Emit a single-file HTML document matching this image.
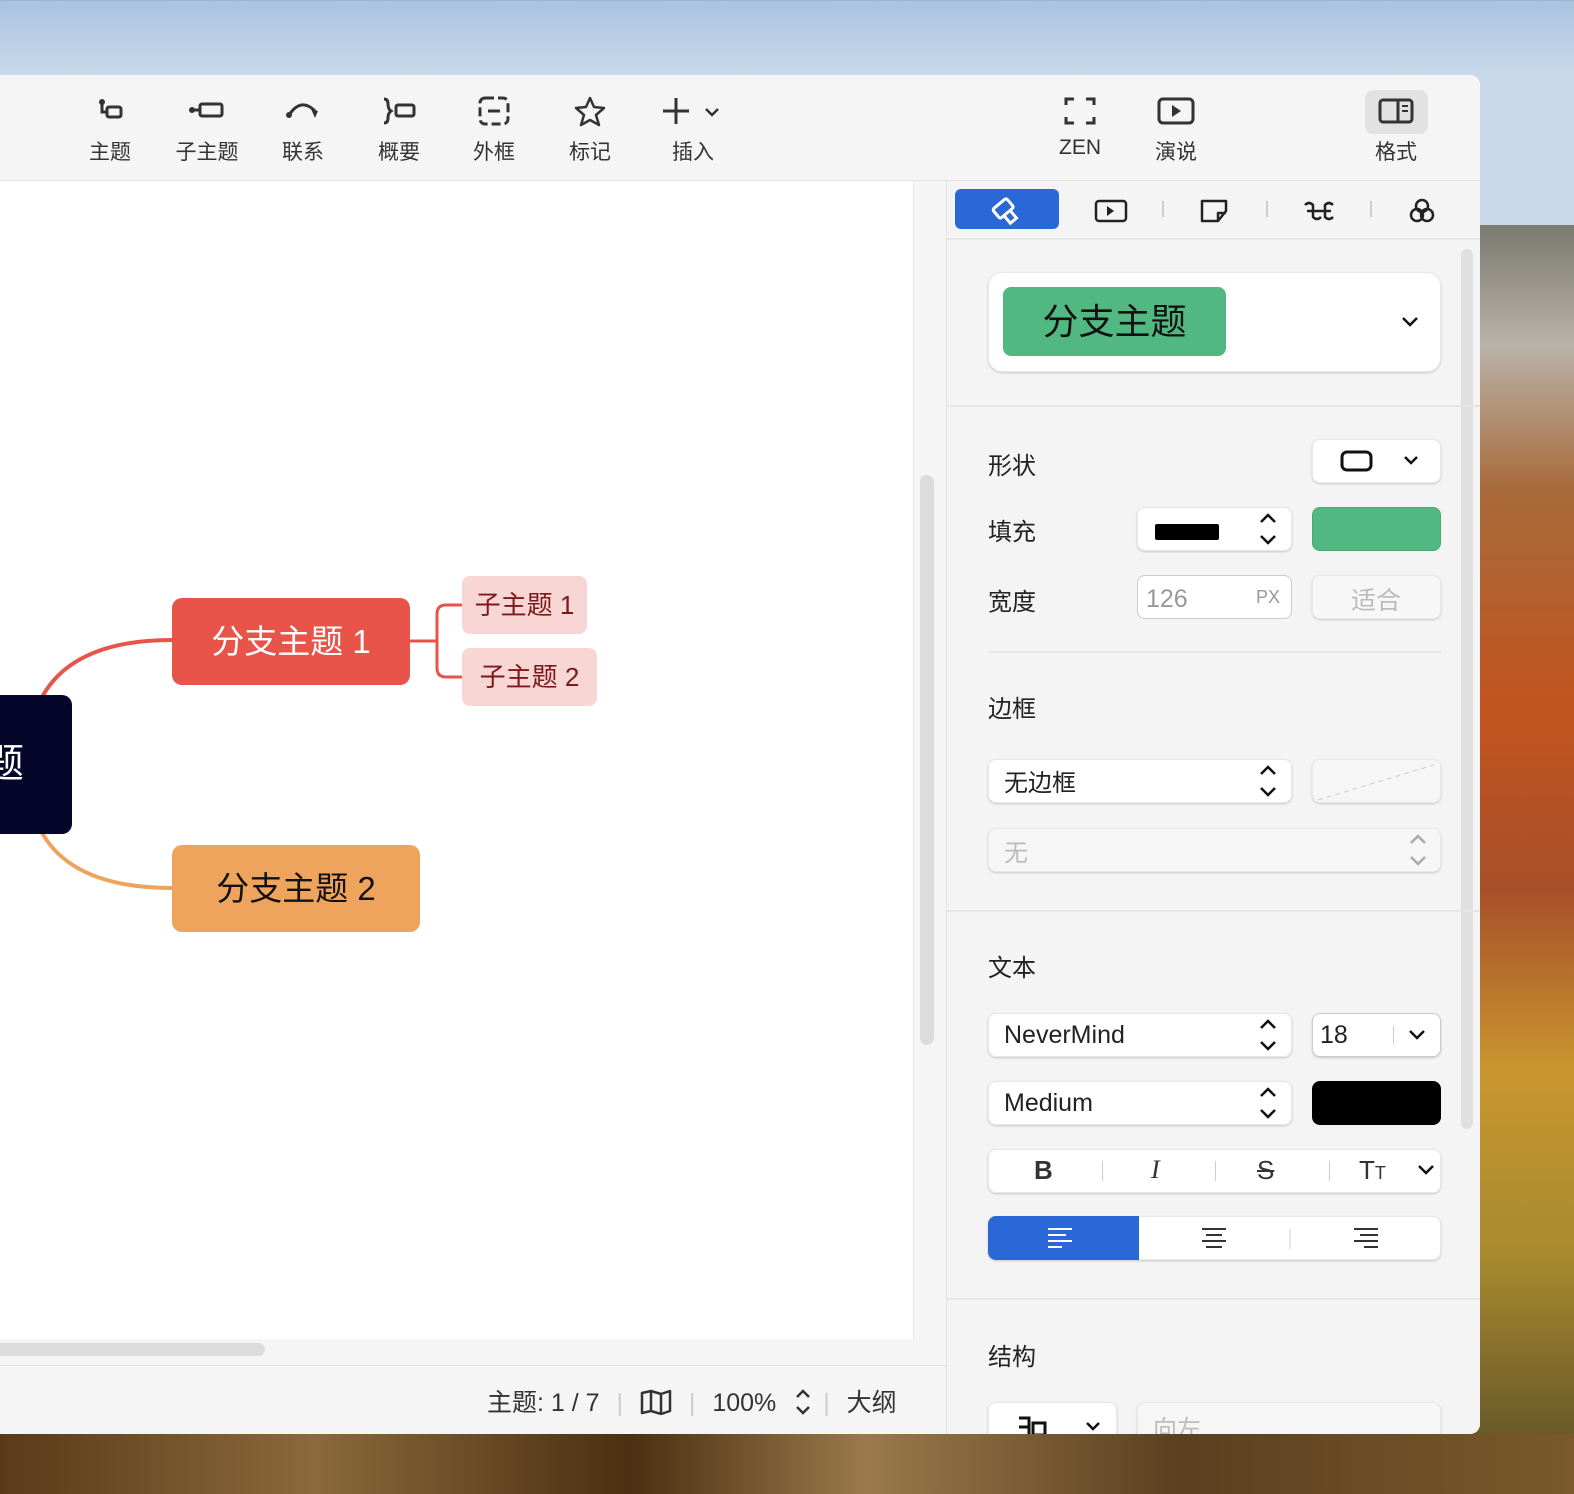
<!DOCTYPE html>
<html><head><meta charset="utf-8"><style>
*{box-sizing:border-box;margin:0;padding:0}
body{width:1574px;height:1490px;overflow:hidden;position:relative;font-family:"Liberation Sans","Noto Sans CJK SC",sans-serif;color:#222;
background:linear-gradient(180deg,#a9c3df 0%,#c9d9ea 5%,#c9d9ea 60%,#7a4a1e 96%,#3a2a12 100%)}
.abs{position:absolute}
.mount{left:1474px;top:225px;width:100px;height:1210px;background:linear-gradient(180deg,#7a7a70 0%,#b9b2a8 10%,#a86a3a 22%,#c2541e 40%,#a8502a 55%,#c9962e 70%,#a88a2e 85%,#6a5a2a 100%)}
.water{left:0;top:1434px;width:1574px;height:60px;background:linear-gradient(90deg,#5a3a18,#8a6a3a 20%,#4a3012 40%,#9a7a4a 55%,#5a4020 75%,#7a5a2a)}
.win{left:-10px;top:75px;width:1490px;height:1359px;background:#f5f5f5;border-radius:0 10px 10px 0;overflow:hidden}
.tb{position:absolute;top:0;left:0;width:1490px;height:106px;background:#f5f5f5;border-bottom:1px solid #e2e2e2}
.tbi{position:absolute;top:20px;width:80px;text-align:center;font-size:21px;color:#333}
.tbi svg{display:block;margin:0 auto 9px;height:32px}
.canvas{position:absolute;left:0;top:106px;width:924px;height:1158px;background:#fff;border-right:1px solid #e6e6e6}
.panel{position:absolute;left:956px;top:106px;width:534px;height:1260px;background:#f4f4f4;border-left:1px solid #e2e2e2}
.lbl{position:absolute;left:41px;font-size:24px;color:#222}
.box{position:absolute;background:#fff;border-radius:8px;box-shadow:0 1px 2px rgba(0,0,0,.18);border:1px solid #e8e8e8}
.txt{position:absolute;font-size:25px}
</style></head><body>
<div class="abs mount"></div>
<div class="abs water"></div>
<div class="abs win">
 <div class="tb">
  <div class="tbi" style="left:80px"><svg width="34" height="32" viewBox="0 0 34 32"><circle cx="9" cy="7" r="3" fill="#333"/><path d="M9 7v10h5" stroke="#333" stroke-width="3" fill="none"/><rect x="14" y="12" width="14" height="10" rx="2" stroke="#333" stroke-width="3" fill="none"/></svg>主题</div>
  <div class="tbi" style="left:177px"><svg width="40" height="32" viewBox="0 0 40 32"><circle cx="5" cy="15" r="3" fill="#333"/><path d="M5 15h8" stroke="#333" stroke-width="3"/><rect x="13" y="9" width="22" height="12" rx="2" stroke="#333" stroke-width="3" fill="none"/></svg>子主题</div>
  <div class="tbi" style="left:273px"><svg width="40" height="32" viewBox="0 0 40 32"><path d="M6 20Q18 2 32 16" stroke="#333" stroke-width="3" fill="none"/><circle cx="6" cy="20" r="3" fill="#333"/><path d="M28 14l7 2-3 7z" fill="#333"/></svg>联系</div>
  <div class="tbi" style="left:369px"><svg width="40" height="32" viewBox="0 0 40 32"><path d="M5 4q4 0 4 5t3 7q-3 2-3 7t-4 5" stroke="#333" stroke-width="3" fill="none"/><rect x="17" y="10" width="18" height="11" rx="2" stroke="#333" stroke-width="3" fill="none"/></svg>概要</div>
  <div class="tbi" style="left:464px"><svg width="36" height="32" viewBox="0 0 36 32"><rect x="4" y="3" width="28" height="26" rx="5" stroke="#333" stroke-width="3" fill="none" stroke-dasharray="9 4"/><path d="M12 16h12" stroke="#333" stroke-width="3"/></svg>外框</div>
  <div class="tbi" style="left:560px"><svg width="36" height="32" viewBox="0 0 36 32"><path d="M18 3l4 9 10 1-8 7 3 10-9-5-9 5 3-10-8-7 10-1z" stroke="#333" stroke-width="2.5" fill="none" stroke-linejoin="round"/></svg>标记</div>
  <div class="tbi" style="left:663px"><svg width="66" height="32" viewBox="0 0 66 32"><path d="M16 3v26M3 16h26" stroke="#333" stroke-width="3"/><path d="M46 14l6 6 6-6" stroke="#333" stroke-width="2.5" fill="none"/></svg>插入</div>
  <div class="tbi" style="left:1050px"><svg width="36" height="32" viewBox="0 0 36 32"><path d="M4 10V4h8M24 4h8v6M32 22v6h-8M12 28H4v-6" stroke="#333" stroke-width="3" fill="none"/></svg>ZEN</div>
  <div class="tbi" style="left:1146px"><svg width="40" height="32" viewBox="0 0 40 32"><rect x="3" y="4" width="34" height="24" rx="4" stroke="#333" stroke-width="3" fill="none"/><path d="M16 10l9 6-9 6z" fill="#333"/></svg>演说</div>
  <div style="position:absolute;left:1375px;top:15px;width:63px;height:44px;background:#e2e2e2;border-radius:8px"></div>
  <div class="tbi" style="left:1366px"><svg width="40" height="32" viewBox="0 0 40 32"><rect x="4" y="5" width="32" height="22" rx="3" stroke="#333" stroke-width="3" fill="none"/><path d="M22 5v22" stroke="#333" stroke-width="3"/><path d="M26 11h6M26 16h6" stroke="#333" stroke-width="2"/></svg>格式</div>
 </div>
 <div class="canvas">
  <svg width="924" height="1158" style="position:absolute;left:0;top:0">
   <path d="M50 520Q80 459 182 459" stroke="#e8534a" stroke-width="4" fill="none"/>
   <path d="M50 648Q80 707 182 707" stroke="#eea45c" stroke-width="4" fill="none"/>
   <path d="M420 460H447M472 424h-16q-9 0-9 9v54q0 9 9 9h16" stroke="#e8534a" stroke-width="3" fill="none"/>
  </svg>
  <div style="position:absolute;left:-20px;top:514px;width:102px;height:139px;background:#06062a;border-radius:10px;color:#fff;font-size:40px;line-height:139px;text-align:right;padding-right:48px;overflow:hidden">题</div>
  <div style="position:absolute;left:182px;top:417px;width:238px;height:87px;background:#e8534a;border-radius:10px;color:#fff;font-size:33px;line-height:87px;text-align:center">分支主题 1</div>
  <div style="position:absolute;left:182px;top:664px;width:248px;height:87px;background:#eea45c;border-radius:10px;color:#111;font-size:33px;line-height:87px;text-align:center">分支主题 2</div>
  <div style="position:absolute;left:472px;top:395px;width:125px;height:58px;background:#f8d6d4;border-radius:8px;color:#7a1a1a;font-size:26px;line-height:58px;text-align:center">子主题 1</div>
  <div style="position:absolute;left:472px;top:467px;width:135px;height:58px;background:#f8d6d4;border-radius:8px;color:#7a1a1a;font-size:26px;line-height:58px;text-align:center">子主题 2</div>
 </div>
 <div style="position:absolute;left:930px;top:400px;width:14px;height:570px;background:#dcdcdc;border-radius:7px"></div>
 <div style="position:absolute;left:0;top:1268px;width:275px;height:13px;background:#dcdcdc;border-radius:7px"></div>
 <div style="position:absolute;left:0;top:1290px;width:956px;height:1px;background:#e2e2e2"></div>
 <div style="position:absolute;left:497px;top:1308px;font-size:25px;color:#333;white-space:nowrap">主题: 1 / 7 <span style="color:#ccc;margin:0 10px">|</span> <svg width="32" height="26" viewBox="0 0 32 26" style="vertical-align:-4px"><path d="M2 4l9-2 10 3 9-3v20l-9 3-10-3-9 2z M11 2v19M21 5v19" stroke="#333" stroke-width="2.5" fill="none" stroke-linejoin="round"/></svg> <span style="color:#ccc;margin:0 10px">|</span> 100% <svg width="20" height="30" viewBox="0 0 20 30" style="vertical-align:-6px;margin-left:10px"><path d="M4 10l6-6 6 6M4 20l6 6 6-6" stroke="#333" stroke-width="2.5" fill="none"/></svg><span style="color:#ccc;margin:0 10px">|</span> 大纲</div>
 <div class="panel">
  <div style="position:absolute;left:8px;top:8px;width:104px;height:40px;background:#2a68d8;border-radius:6px"></div>
  <svg width="534" height="50" style="position:absolute;left:0;top:4px">
   <g transform="translate(60 28) rotate(-40)" stroke="#fff" stroke-width="3" fill="none"><rect x="-9" y="-12" width="18" height="12" rx="2"/><path d="M-4 0v10h8V0"/></g>
   <rect x="149" y="16" width="30" height="20" rx="3" stroke="#222" stroke-width="2.5" fill="none"/><path d="M160 21l7 5-7 5z" fill="#222"/>
   <path d="M216 6v16M320 6v16M424 6v16" stroke="#ccc" stroke-width="2" transform="translate(0 10)"/>
   <path d="M255 16h24v10l-8 10h-16z M271 36v-8h8" stroke="#222" stroke-width="2.5" fill="none" stroke-linejoin="round"/>
   <path d="M358 20q4-4 8 0v12q4 4 8 0M386 20q-4-4-8 0v12q4 4 8 0M360 26h24" stroke="#222" stroke-width="2.5" fill="none"/>
   <circle cx="475" cy="21" r="6" stroke="#222" stroke-width="2.5" fill="none"/><circle cx="470" cy="30" r="6" stroke="#222" stroke-width="2.5" fill="none"/><circle cx="480" cy="30" r="6" stroke="#222" stroke-width="2.5" fill="none"/>
  </svg>
  <div style="position:absolute;left:0;top:57px;width:534px;height:2px;background:#e6e6e6"></div>
  <div style="position:absolute;left:514px;top:68px;width:12px;height:880px;background:#e0e0e0;border-radius:6px"></div>
  <div class="box" style="left:41px;top:91px;width:453px;height:100px;border-radius:14px"></div>
  <div style="position:absolute;left:56px;top:106px;width:223px;height:69px;background:#52b882;border-radius:8px;font-size:36px;line-height:69px;text-align:center;color:#111">分支主题</div>
  <svg width="20" height="14" style="position:absolute;left:453px;top:134px"><path d="M3 3l7 7 7-7" stroke="#111" stroke-width="2.5" fill="none"/></svg>
  <div style="position:absolute;left:0;top:224px;width:534px;height:2px;background:#e6e6e6"></div>
  <div class="lbl" style="top:265px">形状</div>
  <div class="box" style="left:365px;top:258px;width:129px;height:44px"></div>
  <svg width="100" height="30" style="position:absolute;left:390px;top:266px"><rect x="5" y="5" width="29" height="18" rx="5" stroke="#111" stroke-width="3" fill="none"/><path d="M68 10l6 6 6-6" stroke="#111" stroke-width="2.5" fill="none"/></svg>
  <div class="lbl" style="top:331px">填充</div>
  <div class="box" style="left:190px;top:326px;width:155px;height:44px"></div>
  <div style="position:absolute;left:208px;top:343px;width:64px;height:16px;background:#000;border-radius:2px"></div>
  <svg width="20" height="34" style="position:absolute;left:311px;top:331px"><path d="M3 10l7-7 7 7M3 24l7 7 7-7" stroke="#111" stroke-width="2.5" fill="none"/></svg>
  <div style="position:absolute;left:365px;top:326px;width:129px;height:44px;background:#52b882;border-radius:8px;border:1px solid #48a774"></div>
  <div class="lbl" style="top:401px">宽度</div>
  <div class="box" style="left:190px;top:394px;width:155px;height:44px;border:1px solid #ccc;box-shadow:none"></div>
  <div class="txt" style="left:199px;top:404px;color:#999">126</div>
  <div style="position:absolute;left:309px;top:406px;font-size:18px;color:#999">PX</div>
  <div class="box" style="left:365px;top:394px;width:129px;height:44px;background:#f7f7f7"></div>
  <div class="txt" style="left:404px;top:400px;color:#bbb">适合</div>
  <div style="position:absolute;left:41px;top:470px;width:453px;height:2px;background:#e6e6e6"></div>
  <div class="lbl" style="top:508px">边框</div>
  <div class="box" style="left:41px;top:578px;width:304px;height:44px"></div>
  <div class="txt" style="left:57px;top:582px;font-size:24px">无边框</div>
  <svg width="20" height="34" style="position:absolute;left:311px;top:583px"><path d="M3 10l7-7 7 7M3 24l7 7 7-7" stroke="#111" stroke-width="2.5" fill="none"/></svg>
  <div class="box" style="left:365px;top:578px;width:129px;height:44px;background:#f6f6f6;overflow:hidden"><svg width="129" height="44"><path d="M5 40L124 4" stroke="#ccc" stroke-dasharray="5 4"/></svg></div>
  <div class="box" style="left:41px;top:647px;width:453px;height:44px;background:#f6f6f6"></div>
  <div class="txt" style="left:57px;top:652px;color:#bbb;font-size:24px">无</div>
  <svg width="20" height="34" style="position:absolute;left:461px;top:652px"><path d="M3 10l7-7 7 7M3 24l7 7 7-7" stroke="#aaa" stroke-width="2.5" fill="none"/></svg>
  <div style="position:absolute;left:0;top:729px;width:534px;height:2px;background:#e6e6e6"></div>
  <div class="lbl" style="top:767px">文本</div>
  <div class="box" style="left:41px;top:832px;width:304px;height:44px"></div>
  <div class="txt" style="left:57px;top:840px">NeverMind</div>
  <svg width="20" height="34" style="position:absolute;left:311px;top:837px"><path d="M3 10l7-7 7 7M3 24l7 7 7-7" stroke="#111" stroke-width="2.5" fill="none"/></svg>
  <div class="box" style="left:365px;top:832px;width:129px;height:44px;border:1px solid #ccc"></div>
  <div class="txt" style="left:373px;top:840px">18</div>
  <div style="position:absolute;left:446px;top:845px;width:1px;height:18px;background:#ccc"></div>
  <svg width="20" height="14" style="position:absolute;left:460px;top:847px"><path d="M3 3l7 7 7-7" stroke="#111" stroke-width="2.5" fill="none"/></svg>
  <div class="box" style="left:41px;top:900px;width:304px;height:44px"></div>
  <div class="txt" style="left:57px;top:908px">Medium</div>
  <svg width="20" height="34" style="position:absolute;left:311px;top:905px"><path d="M3 10l7-7 7 7M3 24l7 7 7-7" stroke="#111" stroke-width="2.5" fill="none"/></svg>
  <div style="position:absolute;left:365px;top:900px;width:129px;height:44px;background:#000;border-radius:8px"></div>
  <div class="box" style="left:41px;top:968px;width:453px;height:44px"></div>
  <div style="position:absolute;left:87px;top:974px;font-size:26px;font-weight:bold;color:#333">B</div>
  <div style="position:absolute;left:204px;top:974px;font-size:26px;font-style:italic;font-family:'Liberation Serif',serif;color:#333">I</div>
  <div style="position:absolute;left:310px;top:974px;font-size:26px;color:#333;text-decoration:line-through">S</div>
  <div style="position:absolute;left:412px;top:974px;font-size:26px;color:#333">T<span style="font-size:18px">T</span></div>
  <svg width="20" height="14" style="position:absolute;left:469px;top:982px"><path d="M3 3l7 7 7-7" stroke="#111" stroke-width="2.5" fill="none"/></svg>
  <div style="position:absolute;left:155px;top:980px;width:1px;height:20px;background:#ccc"></div>
  <div style="position:absolute;left:268px;top:980px;width:1px;height:20px;background:#ccc"></div>
  <div style="position:absolute;left:382px;top:980px;width:1px;height:20px;background:#ccc"></div>
  <div class="box" style="left:41px;top:1035px;width:453px;height:44px"></div>
  <div style="position:absolute;left:41px;top:1035px;width:151px;height:44px;background:#2a68d8;border-radius:8px 0 0 8px"></div>
  <svg width="453" height="44" style="position:absolute;left:41px;top:1035px"><path d="M60 13h24M60 19h18M60 25h24M60 31h14" stroke="#fff" stroke-width="2"/><path d="M214 13h24M218 19h16M214 25h24M218 31h16" stroke="#333" stroke-width="2"/><path d="M302 13v20" stroke="#ccc"/><path d="M366 13h24M372 19h18M366 25h24M376 31h14" stroke="#333" stroke-width="2"/></svg>
  <div style="position:absolute;left:0;top:1117px;width:534px;height:2px;background:#e6e6e6"></div>
  <div class="lbl" style="top:1156px">结构</div>
  <div class="box" style="left:41px;top:1221px;width:129px;height:44px"></div>
  <svg width="100" height="30" style="position:absolute;left:68px;top:1232px"><path d="M4 5h10v20M4 14h10" stroke="#111" stroke-width="3" fill="none"/><rect x="18" y="10" width="12" height="12" stroke="#111" stroke-width="3" fill="none"/><path d="M72 10l6 6 6-6" stroke="#111" stroke-width="2.5" fill="none"/></svg>
  <div class="box" style="left:190px;top:1221px;width:304px;height:44px;background:#f6f6f6"></div>
  <div class="txt" style="left:206px;top:1228px;color:#bbb;font-size:24px">向左</div>
 </div>
</div>
</body></html>
